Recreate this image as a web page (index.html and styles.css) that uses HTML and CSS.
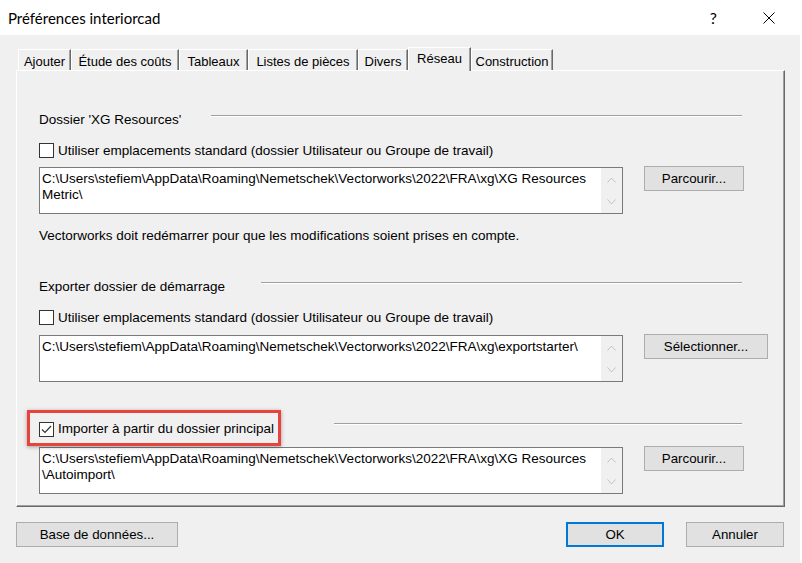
FILE: index.html
```html
<!DOCTYPE html>
<html lang="fr">
<head>
<meta charset="utf-8">
<title>Préférences interiorcad</title>
<link rel="stylesheet" href="styles.css">
</head>
<body>
<div class="window">
  <header class="titlebar">
    <span class="title">Préférences interiorcad</span>
    <span class="help">?</span>
    <span class="close">
      <svg width="12" height="12" viewBox="0 0 12 12"><path d="M0.5 0.5 L11.5 11.5 M11.5 0.5 L0.5 11.5" stroke="#000" stroke-width="1" fill="none"/></svg>
    </span>
  </header>
  <main class="body">
    <nav class="tabs">
      <span class="tab tab-ajouter">Ajouter</span>
      <span class="tab tab-etude">Étude des coûts</span>
      <span class="tab tab-tableaux">Tableaux</span>
      <span class="tab tab-listes">Listes de pièces</span>
      <span class="tab tab-divers">Divers</span>
      <span class="tab tab-reseau active">Réseau</span>
      <span class="tab tab-construction">Construction</span>
    </nav>
    <section class="panel">
      <div class="group-head">
        <span class="group-label label-xg">Dossier 'XG Resources'</span>
        <span class="rule"></span>
      </div>
      <div class="check-row">
        <span class="checkbox"></span>
        <span>Utiliser emplacements standard (dossier Utilisateur ou Groupe de travail)</span>
      </div>
      <div class="field-row">
        <div class="path-box">
          <div class="path-text">C:\Users\stefiem\AppData\Roaming\Nemetschek\Vectorworks\2022\FRA\xg\XG Resources<br>Metric\</div>
          <div class="scroll">
            <svg width="9" height="6" viewBox="0 0 9 6"><polyline points="0.5,5.5 4.5,1 8.5,5.5" fill="none" stroke="#c4c4c4" stroke-width="1"/></svg>
            <svg width="9" height="6" viewBox="0 0 9 6"><polyline points="0.5,0.5 4.5,5 8.5,0.5" fill="none" stroke="#c4c4c4" stroke-width="1"/></svg>
          </div>
        </div>
        <button class="btn btn-browse">Parcourir...</button>
      </div>
      <p class="note">Vectorworks doit redémarrer pour que les modifications soient prises en compte.</p>

      <div class="group-head group-export">
        <span class="group-label label-export">Exporter dossier de démarrage</span>
        <span class="rule"></span>
      </div>
      <div class="check-row">
        <span class="checkbox"></span>
        <span>Utiliser emplacements standard (dossier Utilisateur ou Groupe de travail)</span>
      </div>
      <div class="field-row field-row-tight">
        <div class="path-box">
          <div class="path-text">C:\Users\stefiem\AppData\Roaming\Nemetschek\Vectorworks\2022\FRA\xg\exportstarter\</div>
          <div class="scroll">
            <svg width="9" height="6" viewBox="0 0 9 6"><polyline points="0.5,5.5 4.5,1 8.5,5.5" fill="none" stroke="#c4c4c4" stroke-width="1"/></svg>
            <svg width="9" height="6" viewBox="0 0 9 6"><polyline points="0.5,0.5 4.5,5 8.5,0.5" fill="none" stroke="#c4c4c4" stroke-width="1"/></svg>
          </div>
        </div>
        <button class="btn btn-select">Sélectionner...</button>
      </div>

      <div class="group-head group-import">
        <span class="group-label label-import">
          <span class="checkbox checked">
            <svg width="13" height="13" viewBox="0 0 13 13"><polyline points="2,6.5 5,9.5 11,3" fill="none" stroke="#333" stroke-width="1.2"/></svg>
          </span>
          <span>Importer à partir du dossier principal</span>
        </span>
        <span class="rule"></span>
        <span class="highlight"></span>
      </div>
      <div class="field-row field-row-tight">
        <div class="path-box">
          <div class="path-text">C:\Users\stefiem\AppData\Roaming\Nemetschek\Vectorworks\2022\FRA\xg\XG Resources<br>\Autoimport\</div>
          <div class="scroll">
            <svg width="9" height="6" viewBox="0 0 9 6"><polyline points="0.5,5.5 4.5,1 8.5,5.5" fill="none" stroke="#c4c4c4" stroke-width="1"/></svg>
            <svg width="9" height="6" viewBox="0 0 9 6"><polyline points="0.5,0.5 4.5,5 8.5,0.5" fill="none" stroke="#c4c4c4" stroke-width="1"/></svg>
          </div>
        </div>
        <button class="btn btn-browse">Parcourir...</button>
      </div>
    </section>
    <footer class="actions">
      <button class="btn btn-db">Base de données...</button>
      <span class="spacer"></span>
      <button class="btn btn-ok">OK</button>
      <button class="btn btn-cancel">Annuler</button>
    </footer>
  </main>
</div>
</body>
</html>
```
FILE: styles.css
```css
* { box-sizing: border-box; }

body {
  margin: 0;
  background: #ffffff;
  font-family: "Liberation Sans", Arial, sans-serif;
  font-size: 13px;
  color: #000;
}

.window {
  width: 800px;
  height: 563px;
  background: #f0f0f0;
  overflow: hidden;
}

.titlebar {
  height: 35px;
  background: #ffffff;
  display: flex;
  align-items: center;
}

.title {
  flex: 1;
  margin-left: 8px;
  font-family: Lato, "Noto Sans", sans-serif;
  font-size: 15px;
  color: #000;
}

.help {
  font-family: Lato, "Noto Sans", sans-serif;
  font-size: 16px;
  margin-right: 46px;
}

.close {
  display: flex;
  width: 12px;
  height: 12px;
  margin-right: 25px;
}

.body {
  padding: 12px 0 0 16px;
}

.tabs {
  display: flex;
  align-items: flex-end;
  height: 23px;
  margin-left: 2px;
  position: relative;
  z-index: 1;
}

.tab {
  height: 21px;
  display: flex;
  align-items: center;
  justify-content: center;
  padding-top: 2px;
  border-top: 1px solid #ffffff;
  border-left: 1px solid #ffffff;
  border-right: 1px solid #696969;
  box-shadow: inset -1px 0 0 #a0a0a0;
  white-space: nowrap;
}

.tab.active {
  height: 24px;
  margin-bottom: -1px;
  padding-top: 0;
  padding-bottom: 2px;
  background: #f0f0f0;
}

.tab-ajouter { width: 53px; }
.tab-etude { width: 108px; }
.tab-tableaux { width: 69px; }
.tab-listes { width: 110px; }
.tab-divers { width: 50px; }
.tab-reseau { width: 63px; }
.tab-construction { width: 82px; }

.panel {
  width: 769px;
  border-top: 1px solid #ffffff;
  border-left: 1px solid #ffffff;
  border-right: 1px solid #696969;
  border-bottom: 1px solid #696969;
  box-shadow: inset -1px -1px 0 #a0a0a0;
  padding: 41px 0 12px 22px;
  font-size: 13.5px;
}

.group-head {
  display: flex;
  align-items: flex-start;
  width: 703px;
  height: 16px;
  line-height: 16px;
  position: relative;
}

.group-export { margin-top: 35px; }
.group-import { margin-top: 39px; }

.group-label {
  display: flex;
  align-items: center;
  white-space: nowrap;
}

.label-xg { width: 172px; }
.label-export { width: 222px; }
.label-import { width: 295px; }

.rule {
  flex: 1;
  margin-top: 3px;
  border-top: 1px solid #a0a0a0;
  border-bottom: 1px solid #ffffff;
}

.group-import .rule { margin-top: 2px; }

.check-row {
  display: flex;
  align-items: center;
  height: 16px;
  margin-top: 14px;
  white-space: nowrap;
}

.checkbox {
  width: 15px;
  height: 15px;
  border: 1px solid #333333;
  background: #ffffff;
  margin-right: 4px;
  flex: none;
  display: flex;
  align-items: center;
  justify-content: center;
}

.highlight {
  position: absolute;
  left: -12px;
  top: -11px;
  width: 254px;
  height: 36px;
  border: 3px solid #e8423f;
  box-shadow: 0 1px 4px rgba(0, 0, 0, 0.35);
  pointer-events: none;
}

.field-row {
  display: flex;
  align-items: flex-start;
  height: 48px;
  margin-top: 8px;
}

.field-row-tight { margin-top: 9px; }

.path-box {
  display: flex;
  width: 584px;
  height: 47px;
  margin-top: 1px;
  margin-right: 21px;
  border: 1px solid #7a7a7a;
  background: #ffffff;
}

.path-text {
  flex: 1;
  padding: 3px 0 0 2px;
  line-height: 16px;
  white-space: nowrap;
  overflow: hidden;
}

.scroll {
  width: 21px;
  background: #f0f0f0;
  display: flex;
  flex-direction: column;
  align-items: center;
  justify-content: space-between;
  padding: 9px 0 8px;
}

.scroll svg { display: block; }

.btn {
  height: 25px;
  padding: 0;
  background: #e1e1e1;
  border: 1px solid #adadad;
  font-family: "Liberation Sans", Arial, sans-serif;
  font-size: 13.3px;
  color: #000;
}

.btn-browse { width: 100px; }
.btn-select { width: 124px; }

.note {
  margin: 14px 0 0;
  height: 16px;
  line-height: 16px;
}

.actions {
  display: flex;
  width: 768px;
  margin-top: 15px;
}

.spacer { flex: 1; }

.btn-db { width: 162px; }
.btn-ok {
  width: 98px;
  border: 2px solid #0078d7;
  margin-right: 22px;
}
.btn-cancel { width: 98px; }
```
